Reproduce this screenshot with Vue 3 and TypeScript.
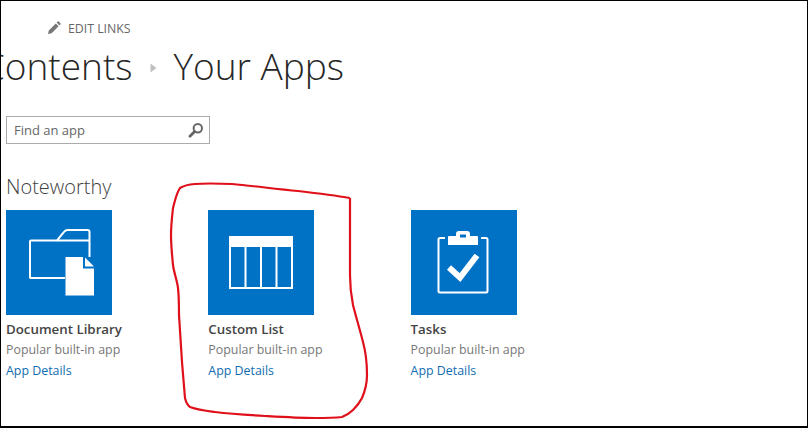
<script setup lang="ts">
interface AppItem { name: string; icon: string }
const apps: AppItem[] = [
  { name: 'Document Library', icon: 'doc' },
  { name: 'Custom List', icon: 'list' },
  { name: 'Tasks', icon: 'tasks' },
]
</script>

<template>
  <div class="page">
    <div class="edit">
      <svg class="pencil" width="14" height="14" viewBox="0 0 14 14">
        <path d="M1 13l.8-3.600 7-7 2.800 2.800-7 7z M9.600 1.600l1-1a.8.8 0 0 1 1.100 0l1.700 1.700a.8.8 0 0 1 0 1.100l-1 1z" fill="#777" />
      </svg>
      <span>EDIT LINKS</span>
    </div>
    <h1 class="title">
      <span class="crumb">Site Contents</span>
      <svg class="sep" width="7" height="10" viewBox="0 0 7 10"><path d="M0.500 0.500L6.500 5L0.500 9.500z" fill="#c0c0c0" /></svg>
      <span class="current">Your Apps</span>
    </h1>
    <div class="search">
      <span class="placeholder">Find an app</span>
      <svg width="16" height="16" viewBox="0 0 16 16" fill="none">
        <circle cx="9.800" cy="6.200" r="4.200" stroke="#666" stroke-width="2" />
        <path d="M6.600 9.600L2 14.200" stroke="#666" stroke-width="2.800" stroke-linecap="round" />
      </svg>
    </div>
    <h2 class="section">Noteworthy</h2>
    <div class="apps">
      <div v-for="a in apps" :key="a.name" class="app">
        <div class="tile">
          <svg width="106" height="105" viewBox="0 0 106 105" fill="none">
            <template v-if="a.icon === 'doc'">
              <path d="M24 68.500V31.500q0-1 1-1H51L58 22q1.500-2 3.500-2H81.500q2 0 2 2V47" stroke="#fff" stroke-width="2" />
              <path d="M51 30.500H83.500" stroke="#fff" stroke-width="2" />
              <path d="M24 68H59" stroke="#fff" stroke-width="2" />
              <path d="M59.500 47H77V58.500H88V85.500H59.500z" fill="#fff" />
              <path d="M79 47.500L88 56.500H79z" fill="#fff" />
            </template>
            <template v-else-if="a.icon === 'list'">
              <rect x="21" y="26" width="64" height="10" fill="#fff" />
              <rect x="22" y="36" width="62" height="42" stroke="#fff" stroke-width="2" />
              <path d="M37.500 36V78M53 36V78M68.500 36V78" stroke="#fff" stroke-width="2" />
            </template>
            <template v-else>
              <path d="M34 28H29q-1.500 0-1.500 1.500V81q0 1.500 1.500 1.500H75q1.500 0 1.500-1.500V29.500Q76.500 28 75 28H70" stroke="#fff" stroke-width="2" />
              <path fill-rule="evenodd" d="M37 35V27q0-1 1-1H45V24q0-3 3-3H56q3 0 3 3V26H66q1 0 1 1V35zM49 24.500V27.500H55V24.500z" fill="#fff" />
              <path d="M38 57.500L49 67.500L66 45.500" stroke="#fff" stroke-width="6" />
            </template>
          </svg>
        </div>
        <div class="name">{{ a.name }}</div>
        <div class="desc">Popular built-in app</div>
        <div class="link">App Details</div>
      </div>
    </div>
    <svg class="scribble" width="808" height="428" viewBox="0 0 808 428" fill="none">
      <path d="M350 198C332 195 315 193 298 191C276 189 254 186 232 184C220 183.500 207 183 195 184C188 184.500 183 186 180 188C176 194 175 201 173 208C172 217 171 226 171 235C171 245 172 255 173 265C174 273 177 280 178 288C179 297 179 306 179 315C180 331 181 346 182 362C183 374 184 386 185 398C186 402 187 405 190 407C198 410 207 411 215 412C232 414 248 415 265 416C282 417 298 418 315 418C324 418 333 418 342 417C347 415 350 413 353 410C357 406 360 402 362 398C365 391 367 383 367 375C367 364 366 353 363 342C360 330 356 317 353 305C351 295 350 285 350 275C350 249 350 224 350 198" stroke="#e0101a" stroke-width="2.200" />
    </svg>
  </div>
</template>

<style>
html, body { margin: 0; background: #fff; }
</style>

<style scoped>
.page {
  position: relative;
  box-sizing: border-box;
  width: 808px;
  height: 428px;
  overflow: hidden;
  background: #fff;
  border-top: 1px solid #000;
  border-left: 1px solid #000;
  border-right: 1px solid #000;
  border-bottom: 2px solid #000;
  font-family: "Open Sans", "Noto Sans", sans-serif;
  padding-left: 5px;
}
.edit {
  display: flex;
  align-items: center;
  gap: 7px;
  margin-left: 41px;
  margin-top: 19px;
  height: 16px;
  font-size: 12.300px;
  color: #666;
}
.title {
  margin: 5px 0 0 -95px;
  display: flex;
  align-items: center;
  white-space: nowrap;
  font-size: 37px;
  line-height: 50px;
  font-weight: 300;
  color: #262626;
}
.sep { margin: 4px 0 0 17px; }
.current { margin-left: 17px; }
.search {
  box-sizing: border-box;
  display: flex;
  align-items: center;
  justify-content: space-between;
  width: 204px;
  height: 28px;
  margin-top: 25px;
  padding: 0 5px 0 7px;
  border: 1px solid #ababab;
}
.placeholder { font-size: 13px; color: #666; }
.section {
  margin: 29px 0 0;
  font-size: 20px;
  line-height: 28px;
  font-weight: 300;
  color: #3f3f3f;
}
.apps {
  display: flex;
  gap: 96.300px;
  margin-top: 9px;
}
.app { width: 106px; white-space: nowrap; }
.tile { width: 106px; height: 105px; background: #0072c6; }
.tile svg { display: block; }
.name { margin-top: 5px; font-size: 13.300px; line-height: 18px; font-weight: 600; color: #444; }
.desc { margin-top: 3px; font-size: 12.400px; line-height: 18px; color: #777; }
.link { margin-top: 3px; font-size: 12.400px; line-height: 18px; color: #0f6cb0; }
.scribble { position: absolute; left: -1px; top: -1px; pointer-events: none; }
</style>
